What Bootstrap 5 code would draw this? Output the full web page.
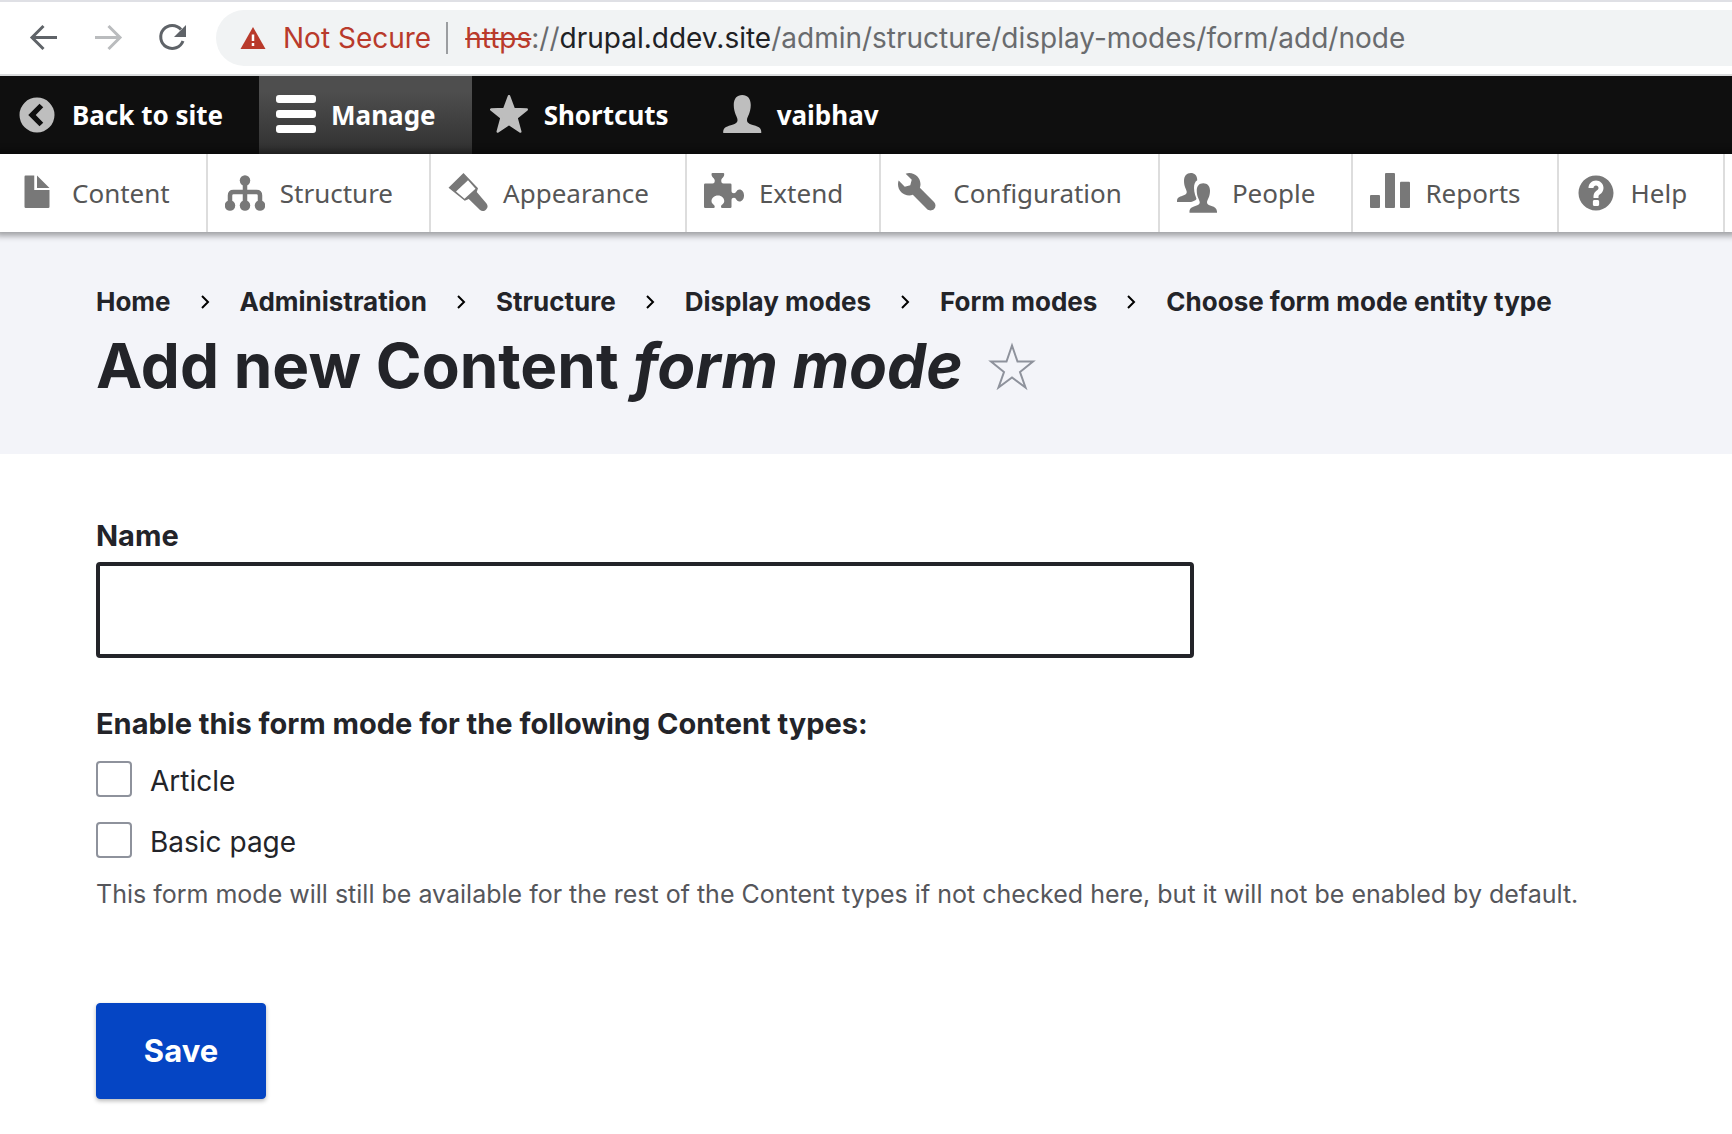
<!DOCTYPE html>
<html lang="en">
<head>
<meta charset="utf-8">
<meta name="viewport" content="width=device-width, initial-scale=1">
<title>Add new Content form mode</title>
<link href="https://cdn.jsdelivr.net/npm/bootstrap@5.3.0/dist/css/bootstrap.min.css" rel="stylesheet">
<style>
  body { font-family: Inter, "Liberation Sans", sans-serif; color: #232429; background: #fff; }
  a { color: inherit; text-decoration: none; }

  .browser-bar { height: 76px; border-top: 2px solid #dfe0e5; border-bottom: 2px solid #d9dbdc; padding-left: 24px; }
  .browser-bar button { width: 40px; height: 40px; margin-right: 24px; color: #5f6368; background: none; border: 0; padding: 0; }
  .browser-bar button:disabled { color: #babcbe; }
  .omnibox { height: 56px; background: #f1f3f4; border-radius: 28px 0 0 28px; padding-left: 23px; font-size: 28px; color: #696b6e; white-space: nowrap; overflow: hidden; }
  .insecure { color: #b93a2b; }
  .omni-rule { width: 2px; height: 32px; background: #9b9da0; margin: 0 17px 0 15px; }
  .host { color: #202124; }

  .admin-bar, .admin-tray { font-family: "Noto Sans", "Open Sans", sans-serif; font-size: 26px; line-height: 78px; height: 78px; white-space: nowrap; }
  .admin-bar { background: #0f0f0f; color: #fff; font-weight: 700; }
  .admin-bar a, .admin-tray a { display: flex; align-items: center; gap: 15px; height: 78px; padding: 0 36px 0 17px; }
  .admin-bar a.active { background: linear-gradient(#4e4e4e 20%, #303030); }
  .admin-bar svg { fill: #bebebe; }
  .admin-bar .active svg { fill: #fff; }
  .admin-tray { background: #fff; color: #565656; position: relative; box-shadow: 0 0 6px 4px rgba(0,0,0,.34); }
  .admin-tray a { border-right: 2px solid #ddd; }
  .admin-tray svg { fill: #787878; }
  .tool-icon { width: 40px; height: 40px; flex: none; }

  .page-head { background: #f3f4f9; padding: 52px 96px 48px; }
  .crumbs { font-size: 26px; line-height: 36px; font-weight: 700; gap: 30px; }
  .page-title { font-size: 62px; line-height: 80px; font-weight: 700; gap: 24px; padding-top: 6px; }
  .page-title button { background: none; border: 0; padding: 0; line-height: 0; }

  .mode-form { padding: 62px 96px 30px; font-size: 28px; line-height: 40px; }
  .mode-form .field-title { display: block; font-size: 29px; line-height: 40px; font-weight: 700; margin-bottom: 6px; }
  .name-input { width: 1098px; max-width: 100%; height: 96px; border: 4px solid #232429; border-radius: 4px; font-size: 32px; }
  .mode-form fieldset { margin-top: 46px; }
  .mode-form legend.field-title { margin-bottom: 17px; }
  .mode-form .form-check { display: flex; gap: 18px; padding: 0; margin: 0 0 21px; }
  .mode-form .form-check:last-of-type { margin-bottom: 14px; }
  .mode-form .form-check-input { width: 36px; height: 36px; margin: 0; float: none; border: 2px solid #8e929c; border-radius: 4px; flex: none; }
  .hint { font-size: 25px; line-height: 36px; color: #55565b; margin: 0; }
  .save-btn { width: 170px; height: 96px; font-size: 31px; font-weight: 700; border-radius: 4px; --bs-btn-bg: #0545c4; --bs-btn-border-color: #0545c4; box-shadow: 0 2px 4px rgba(0,0,0,.28); margin-top: 91px; }
</style>
</head>
<body>
<div class="browser-bar d-flex align-items-center">
  <button type="button" aria-label="Back"><svg width="40" height="40" fill="none" stroke="currentColor" stroke-width="3"><path d="M33 19.500H8.500M19.500 8 8 19.500 19.500 31"/></svg></button>
  <button type="button" aria-label="Forward" disabled><svg width="40" height="40" fill="none" stroke="currentColor" stroke-width="3"><path d="M7 19.500h24.500M20.500 8 32 19.500 20.500 31"/></svg></button>
  <button type="button" aria-label="Reload"><svg width="40" height="40" fill="none" stroke="currentColor" stroke-width="3"><path d="M29 11.500A11.500 11.500 0 1 0 31 23"/><path d="M34 7v12H22z" fill="currentColor" stroke="none"/></svg></button>
  <div class="omnibox d-flex align-items-center flex-grow-1">
    <svg width="28" height="24" viewBox="0 0 28 24"><path d="M14 1 26.500 23h-25z" fill="#b93a2b"/><path d="M14 8.500v6.500M14 17v3" stroke="#fff" stroke-width="2.500"/></svg>
    <span class="insecure ms-3">Not Secure</span>
    <span class="omni-rule"></span>
    <span><s class="insecure">https</s>://<span class="host">drupal.ddev.site</span>/admin/structure/display-modes/form/add/node</span>
  </div>
</div>

<nav class="admin-bar d-flex" aria-label="Toolbar">
  <a href="#"><svg class="tool-icon" viewBox="0 0 16 16"><path fill-rule="evenodd" d="M8 1a7 7 0 1 0 0 14A7 7 0 0 0 8 1zm1 2.500 1.500 1.400L7.500 8l3 3.100L9 12.500 4.500 8z"/></svg>Back to site</a>
  <a href="#" class="active"><svg class="tool-icon" viewBox="0 0 16 16"><rect width="16" height="3.200" rx="1.200"/><rect y="6" width="16" height="3.200" rx="1.200"/><rect y="12" width="16" height="3.200" rx="1.200"/></svg>Manage</a>
  <a href="#"><svg class="tool-icon" viewBox="0 0 16 16"><path d="M8 .5 9.900 5.600 15.100 5.800 11 9.100 12.500 14.600 8 11.600 3.500 14.600 5 9.100.9 5.800 6.100 5.600z" stroke="#bebebe" stroke-linejoin="round"/></svg>Shortcuts</a>
  <a href="#"><svg class="tool-icon" viewBox="0 0 16 16"><path d="M.5 15.200c-.2-2 1-2.500 3-3.100 2-.6 2.700-1 2.700-2.100 0-1.200-1.500-2.800-1.500-6C4.700 1.400 6 0 8.100 0s3.400 1.400 3.400 4c0 3.200-1.500 4.800-1.500 6 0 1.100.7 1.500 2.700 2.100 2 .6 3.200 1.100 3 3.100z"/></svg>vaibhav</a>
</nav>

<nav class="admin-tray d-flex" aria-label="Administration menu">
  <a href="#"><svg class="tool-icon" viewBox="0 0 16 16"><path d="M3.400 1h3.500v5.800H13v6.700q0 .5-.5.500h-9q-.5 0-.5-.5v-12q0-.5.400-.5zM8 1l5 5H8z"/></svg>Content</a>
  <a href="#"><svg class="tool-icon" viewBox="0 0 16 16"><circle cx="8" cy="3" r="2.100"/><circle cx="2" cy="13" r="2.100"/><circle cx="8" cy="13" r="2.100"/><circle cx="14" cy="13" r="2.100"/><path d="M8 4v8M2 12V9q0-1.400 1.400-1.400h9.200Q14 7.600 14 9v3" fill="none" stroke="#787878" stroke-width="1.800"/></svg>Structure</a>
  <a href="#"><svg class="tool-icon" viewBox="0 0 16 16"><path fill-rule="evenodd" d="M6.200 0 12 6.100l-.5 1.500 3.900 4.600c1.400 1.700-1 4-2.600 2.600L8.300 10.400l-1.600.7L.2 5.900zM8 2.900 3.200 7.400l3.400 2.900 4.400-4z"/></svg>Appearance</a>
  <a href="#"><svg class="tool-icon" viewBox="0 0 16 16"><path d="M3 .4Q3 0 3.400 0h4.300q.4 0 .4.400c0 1.400-1.200 1.600-1.200 2.600 0 .7.200 1.200.9 1.200h2.700q.5 0 .5.500v2.400c0 .7.400 1 1 1 1 0 .9-1.500 2.200-1.500 1 0 1.800 1 1.800 2.400s-.8 2.400-1.800 2.400c-1.300 0-1.200-1.500-2.200-1.500-.6 0-1 .3-1 1v2.600q0 .5-.5.500H7.300q-.5 0-.5-.5c0-1 1.300-1 1.300-2.300 0-1.200-1-2.200-2.500-2.200S3 10 3 11.200c0 1.300 1.300 1.300 1.300 2.300q0 .5-.5.500H.5Q0 14 0 13.500V4.700q0-.5.500-.5h2.900c.7 0 .9-.5.900-1.200C4.300 2 3 1.800 3 .4z"/></svg>Extend</a>
  <a href="#"><svg class="tool-icon" viewBox="0 0 16 16"><path d="M14.416 11.586l-.01-.008v-.001l-5.656-5.656c.15-.449.252-.921.252-1.421 0-2.485-2.016-4.500-4.502-4.500-.505 0-.981.102-1.434.255l2.431 2.431-.588 2.196-2.196.588-2.445-2.445c-.162.464-.268.956-.268 1.475 0 2.486 2.014 4.500 4.500 4.500.5 0 .972-.102 1.421-.251l5.667 5.665c.781.781 2.047.781 2.828 0s.781-2.047 0-2.828z"/></svg>Configuration</a>
  <a href="#"><svg class="tool-icon" viewBox="0 0 16 16"><path d="M0 11.600c-.1-1.700.8-2 2.200-2.500 1.200-.4 1.700-.7 1.700-1.500 0-.9-1.100-2-1.100-4.400C2.800 1.100 3.900 0 5.500 0 7 0 8.100 1 8.100 2.900c-1 .6-1.300 1.700-1.300 3.100 0 2.100.8 3.500 1 4.400-.2.600-1.400.9-2.200 1.200z"/><path d="M5 15.900c-.1-1.700.8-2.200 2.300-2.700 1.300-.4 1.800-.7 1.800-1.500 0-.9-1.200-2-1.200-4.600 0-1.900 1-3 2.600-3s2.700 1.100 2.700 3c0 2.600-1.200 3.700-1.200 4.600 0 .8.500 1.100 1.800 1.500 1.500.5 2.300 1 2.200 2.700z"/></svg>People</a>
  <a href="#"><svg class="tool-icon" viewBox="0 0 16 16"><rect y="8.800" width="4" height="5.200" rx=".4"/><rect x="6" width="4" height="14" rx=".4"/><rect x="12" y="3.500" width="4" height="10.500" rx=".4"/></svg>Reports</a>
  <a href="#"><svg class="tool-icon" viewBox="0 0 16 16"><path d="M8.002 1c-3.868 0-7.002 3.134-7.002 7s3.134 7 7.002 7c3.865 0 7-3.134 7-7s-3.135-7-7-7zm3 5c0 .551-.16 1.085-.477 1.586l-.158.220c-.07.093-.189.241-.361.393-.168.148-.35.299-.545.447l-.203.189-.141.129-.096.170-.021.235v.630h-2.001v-.704c.026-.396.078-.73.204-.999.125-.269.271-.498.439-.688l.225-.21-.01-.015.176-.14.137-.128c.186-.139.357-.277.516-.417l.148-.18c.098-.152.168-.323.168-.518 0-.552-.447-1-1.001-1-.553 0-1.002.448-1.002 1h-2c0-1.657 1.343-3 3.002-3 1.656 0 3 1.343 3 3zm-1.750 6.619c0 .344-.281.625-.625.625h-1.250c-.345 0-.626-.281-.626-.625v-1.238c0-.344.281-.625.626-.625h1.250c.344 0 .625.281.625.625v1.238z"/></svg>Help</a>
</nav>

<header class="page-head">
  <nav aria-label="Breadcrumb">
    <ol class="crumbs list-unstyled d-flex align-items-center m-0">
      <li><a href="#">Home</a></li>
      <li aria-hidden="true" class="d-flex"><svg width="9" height="14" fill="none" stroke="#000" stroke-width="2"><path d="m1 1 6 6-6 6"/></svg></li>
      <li><a href="#">Administration</a></li>
      <li aria-hidden="true" class="d-flex"><svg width="9" height="14" fill="none" stroke="#000" stroke-width="2"><path d="m1 1 6 6-6 6"/></svg></li>
      <li><a href="#">Structure</a></li>
      <li aria-hidden="true" class="d-flex"><svg width="9" height="14" fill="none" stroke="#000" stroke-width="2"><path d="m1 1 6 6-6 6"/></svg></li>
      <li><a href="#">Display modes</a></li>
      <li aria-hidden="true" class="d-flex"><svg width="9" height="14" fill="none" stroke="#000" stroke-width="2"><path d="m1 1 6 6-6 6"/></svg></li>
      <li><a href="#">Form modes</a></li>
      <li aria-hidden="true" class="d-flex"><svg width="9" height="14" fill="none" stroke="#000" stroke-width="2"><path d="m1 1 6 6-6 6"/></svg></li>
      <li><a href="#">Choose form mode entity type</a></li>
    </ol>
  </nav>
  <h1 class="page-title d-flex align-items-center m-0"><span>Add new Content <em>form mode</em></span>
    <button type="button" aria-label="Add to shortcuts"><svg width="50" height="50" viewBox="0 0 50 50" fill="none" stroke="#8e929c" stroke-width="2"><path d="M25 4.500 30.500 20.500H46L33 31 38.500 46.500 25 36.500 11.500 46.500 17 31 4 20.500H19.500z"/></svg></button>
  </h1>
</header>

<main>
  <form class="mode-form">
    <label for="mode-name" class="field-title">Name</label>
    <input id="mode-name" type="text" class="name-input form-control">
    <fieldset>
      <legend class="field-title">Enable this form mode for the following Content types:</legend>
      <div class="form-check"><input class="form-check-input" type="checkbox" id="type-article"><label for="type-article">Article</label></div>
      <div class="form-check"><input class="form-check-input" type="checkbox" id="type-page"><label for="type-page">Basic page</label></div>
      <p class="hint">This form mode will still be available for the rest of the Content types if not checked here, but it will not be enabled by default.</p>
    </fieldset>
    <button type="button" class="save-btn btn btn-primary">Save</button>
  </form>
</main>
<script src="https://cdn.jsdelivr.net/npm/bootstrap@5.3.0/dist/js/bootstrap.bundle.min.js"></script>
</body>
</html>
